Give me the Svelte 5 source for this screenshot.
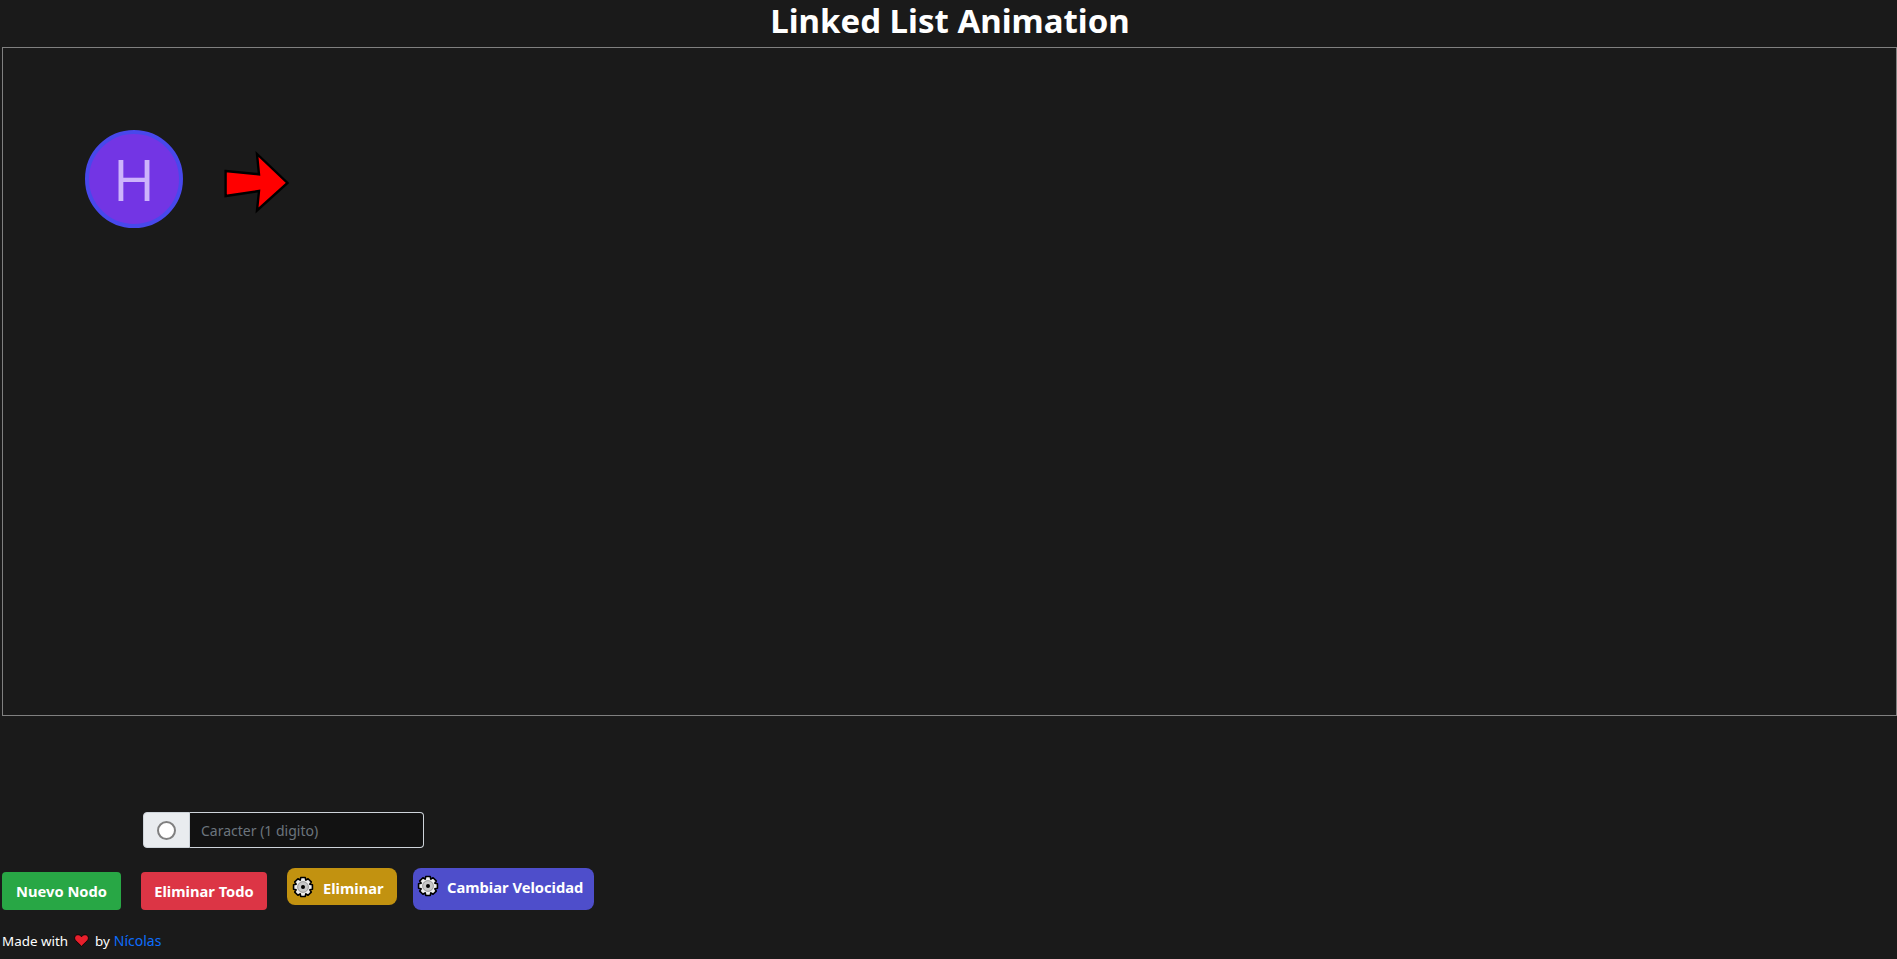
<script>
	const cog = (() => {
		const pts = [];
		const teeth = 8;
		for (let i = 0; i < teeth; i++) {
			const a = (i / teeth) * Math.PI * 2;
			const w = Math.PI / teeth;
			[
				[7.4, -w * 0.98],
				[9.7, -w * 0.6],
				[9.7, w * 0.6],
				[7.4, w * 0.98]
			].forEach(([r, o]) => {
				pts.push(`${(11 + r * Math.cos(a + o)).toFixed(2)},${(11 + r * Math.sin(a + o)).toFixed(2)}`);
			});
		}
		return pts.join(' ');
	})();
</script>

{#snippet gear()}
	<svg class="gear" viewBox="0 0 22 22" aria-hidden="true">
		<polygon points={cog} fill="#f0f0f0" stroke="#000" stroke-width="1.6" stroke-linejoin="round" />
		<circle cx="11" cy="11" r="5.4" fill="#c8c8c8" stroke="#8c8c8c" stroke-width="0.8" />
		<circle cx="11" cy="11" r="2" fill="#000" />
	</svg>
{/snippet}

<div class="page">
	<h1>Linked List Animation</h1>

	<div class="canvas">
		<div class="node">H</div>
		<svg class="arrow" viewBox="0 0 66 66" aria-hidden="true">
			<polygon
				points="2.6,21 36,24.3 34,4 64.5,33 34,60.5 36,41 2.6,46"
				fill="#ff0000"
				stroke="#000"
				stroke-width="2.4"
			/>
		</svg>
	</div>

	<div class="input-group">
		<span class="addon"><span class="radio"></span></span>
		<input type="text" placeholder="Caracter (1 digito)" />
	</div>

	<div class="buttons">
		<button class="btn success">Nuevo Nodo</button>
		<button class="btn danger">Eliminar Todo</button>
		<button class="btn warn">{@render gear()}<span>Eliminar</span></button>
		<button class="btn indigo">{@render gear()}<span>Cambiar Velocidad</span></button>
	</div>

	<footer>
		<span>Made with</span>
		<svg class="heart" viewBox="0 0 16 14" aria-hidden="true">
			<path
				d="M8 13.2 L1.8 7.2 C-0.6 4.6 0.8 0.8 4.2 0.8 C5.9 0.8 7.2 1.7 8 3 C8.8 1.7 10.1 0.8 11.8 0.8 C15.2 0.8 16.6 4.6 14.2 7.2 Z"
				fill="#e8202c"
				stroke="#000"
				stroke-width="0.9"
			/>
		</svg>
		<span>by</span>
		<a href="#top">Nícolas</a>
	</footer>
</div>

<style>
	:global(body) {
		background: #1a1a1a;
		color: #fff;
		font-family: 'Noto Sans', 'Open Sans', sans-serif;
	}

	.page {
		display: flex;
		flex-direction: column;
		height: 959px;
	}

	h1 {
		margin: 0;
		height: 47px;
		padding-left: 3px;
		line-height: 41px;
		text-align: center;
		font-size: 33px;
		font-weight: 700;
	}

	.canvas {
		box-sizing: border-box;
		display: flex;
		align-items: flex-start;
		margin-left: 2px;
		height: 669px;
		padding: 82px 0 0 82px;
		border: 1px solid #808080;
	}

	.node {
		box-sizing: border-box;
		display: flex;
		align-items: center;
		justify-content: center;
		width: 98px;
		height: 98px;
		border: 4px solid #4848ec;
		border-radius: 50%;
		background: #7335e4;
		color: #cdb4fb;
		font-size: 57px;
		font-weight: 400;
		font-family: 'Open Sans', 'Noto Sans', sans-serif;
	}

	.arrow {
		width: 66px;
		height: 66px;
		margin: 20px 0 0 40px;
	}

	.input-group {
		box-sizing: border-box;
		display: flex;
		width: 281px;
		height: 36px;
		margin: 96px 0 0 143px;
	}

	.addon {
		display: flex;
		align-items: center;
		justify-content: center;
		box-sizing: border-box;
		width: 47px;
		padding-right: 1px;
		background: #e9ecef;
		border: 1px solid #ced4da;
		border-radius: 4px 0 0 4px;
	}

	.radio {
		box-sizing: border-box;
		width: 19px;
		height: 19px;
		border: 2px solid #808080;
		border-radius: 50%;
		background: #fff;
	}

	input {
		box-sizing: border-box;
		flex: 1;
		min-width: 0;
		padding: 0 11px;
		background: #121212;
		border: 1px solid #ced4da;
		border-left: none;
		border-radius: 0 4px 4px 0;
		color: #fff;
		font: 14px 'Noto Sans', 'Open Sans', sans-serif;
	}

	input::placeholder {
		color: #6c757d;
		opacity: 1;
	}

	.buttons {
		display: flex;
		align-items: flex-start;
		margin: 20px 0 0 2px;
	}

	.btn {
		display: flex;
		align-items: flex-start;
		box-sizing: border-box;
		border: none;
		color: #fff;
		font: 700 14.7px 'Noto Sans', 'Open Sans', sans-serif;
		white-space: nowrap;
	}

	.btn.success,
	.btn.danger {
		align-items: center;
		justify-content: center;
		height: 38px;
		margin-top: 4px;
		border-radius: 4px;
	}

	.success {
		width: 119px;
		margin-right: 20px;
		background: #28a745;
	}

	.danger {
		width: 126px;
		margin-right: 20px;
		background: #dc3545;
	}

	.warn {
		width: 110px;
		height: 37px;
		margin-right: 16px;
		border-radius: 8px;
		padding: 8px 0 0 5px;
		background: #c29210;
	}

	.indigo {
		width: 181px;
		height: 42px;
		border-radius: 8px;
		padding: 7px 0 0 4px;
		background: #4e4ecb;
	}

	.gear {
		width: 22px;
		height: 22px;
		flex: none;
		margin-right: 8px;
	}

	.warn .gear {
		margin-right: 9px;
	}

	.btn span {
		line-height: 24px;
	}

	footer {
		display: flex;
		align-items: center;
		margin: 21px 0 0 2px;
		font-size: 13.4px;
	}

	.heart {
		width: 15px;
		height: 13px;
		margin: 0 6px;
	}

	a {
		margin-left: 4px;
		color: #0d6efd;
		font-size: 14px;
		text-decoration: none;
	}
</style>
